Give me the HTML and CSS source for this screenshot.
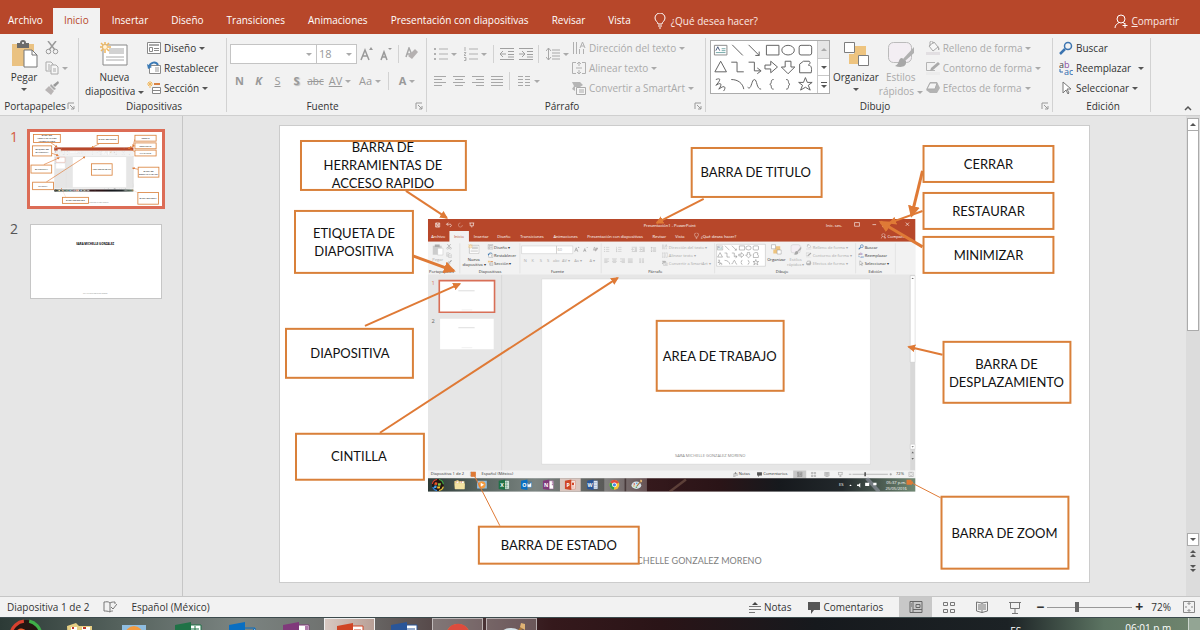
FILE: index.html
```html
<!DOCTYPE html>
<html lang="es">
<head>
    <meta charset="UTF-8">
    <meta name="viewport" content="width=device-width, initial-scale=1.0">
    <title>Presentación - PowerPoint</title>
    <link rel="stylesheet" href="styles.css">
</head>
<body>

<!-- Icon set -->
<svg class="sprite" aria-hidden="true">
    <symbol id="i-paste" viewBox="0 0 28 28">
        <path d="M2 4h22v22H2z" fill="#eac282"/>
        <path d="M7 3h3a3 3 0 0 1 6 0h3v5H7z" fill="#6b6b6b"/><circle cx="13" cy="3" r="1" fill="#fff"/>
        <path d="M14 10h8l5 5v12H14z" fill="#fff" stroke="#777"/><path d="M22 10v5h5" fill="none" stroke="#777"/>
    </symbol>
    <symbol id="i-cut" viewBox="0 0 14 14" fill="none" stroke="#9a9a9a">
        <path d="M3 0l7 9M11 0L4 9" stroke-width="1.5"/><circle cx="3.5" cy="10.5" r="2.3"/><circle cx="10.5" cy="10.5" r="2.3"/>
    </symbol>
    <symbol id="i-copy" viewBox="0 0 14 14" fill="#f6f6f6" stroke="#aaa">
        <path d="M1 1h5l2 2v7H1z"/><path d="M6 4h5l2 2v7H6z"/><path d="M3 4h2M3 6h2M3 8h2M8 8h3M8 10h3"/>
    </symbol>
    <symbol id="i-brush" viewBox="0 0 14 14">
        <path d="M13 0l1 2-4 4-2-2z" fill="#999"/><path d="M6 3l5 5-2 1-4-4z" fill="#aaa"/><path d="M4 5l5 5-3 4L0 9z" fill="#b9b5b5"/>
    </symbol>
    <symbol id="i-newslide" viewBox="0 0 28 24">
        <path d="M3 3h24v20H3z" fill="#fff" stroke="#888"/><path d="M9 6h15v6H9z" fill="#d2d2d2"/><path d="M6 15h18M6 18h18" stroke="#aaa"/>
        <path d="M5 0v11M0 5h11M1 1l8 8M9 1l-8 8" stroke="#f0b75c" stroke-width="1.5"/><circle cx="5" cy="5" r="2" fill="#fff4dc"/>
    </symbol>
    <symbol id="i-layout" viewBox="0 0 14 14" fill="none" stroke="#8a8a8a">
        <path d="M.5 1.5h13v11H.5z" fill="#fff"/><path d="M2 4h10" stroke-width="2" stroke="#aaa"/><path d="M2.5 6.5h3v4h-3z"/><path d="M7 7.500h5M7 9.500h5"/>
    </symbol>
    <symbol id="i-reset" viewBox="0 0 14 14" fill="none">
        <path d="M2.500 4.500h11v8h-11z" fill="#fff" stroke="#8a8a8a"/><path d="M8 6h4v5H8z" fill="#ccc"/>
        <path d="M2 6c1-5 7-6 9-2" stroke="#3b7ab5" stroke-width="2"/><path d="M0 3l1 5 4-2z" fill="#3b7ab5"/>
    </symbol>
    <symbol id="i-section" viewBox="0 0 14 14" fill="none">
        <path d="M3 0v7M0 3h6M1 1l4 4M5 1L1 5" stroke="#f0b75c"/><path d="M7 3h6" stroke="#d98242" stroke-width="2"/>
        <path d="M5.500 6.500h8v6h-8z" fill="#fff" stroke="#888"/><path d="M5 9.500h8" stroke="#888"/>
    </symbol>
    <symbol id="i-grow" viewBox="0 0 14 14" fill="none" stroke="#999">
        <path d="M1 13L5 3l4 10M3 9h5" stroke-width="1.500"/><path d="M9 3l2-3 2 3z" fill="#999" stroke="none"/>
    </symbol>
    <symbol id="i-shrink" viewBox="0 0 14 14" fill="none" stroke="#999">
        <path d="M2 13l3-8 3 8M3 10h4" stroke-width="1.500"/><path d="M9 1l2 2 2-2z" fill="#999" stroke="none"/>
    </symbol>
    <symbol id="i-eraser" viewBox="0 0 14 14">
        <path d="M1 10L4 1l3 7M2 7h4" fill="none" stroke="#a8a8a8" stroke-width="1.500"/><path d="M10 2l3 3-6 7-4-3z" fill="#b5b1b1"/>
    </symbol>
    <symbol id="i-bullets" viewBox="0 0 14 14" stroke="#b0b0b0">
        <path d="M5 2h9M5 7h9M5 12h9"/><path d="M0 2h2M0 7h2M0 12h2" stroke-width="2"/>
    </symbol>
    <symbol id="i-numbers" viewBox="0 0 14 14" stroke="#b0b0b0" fill="none">
        <path d="M5 2h9M5 7h9M5 12h9M1 0v4M0 5.500h2l-2 3h2M0 10.500h2v3H0M1 12h1"/>
    </symbol>
    <symbol id="i-outdent" viewBox="0 0 14 14" stroke="#a0a0a0" fill="none">
        <path d="M0 1.500h14M8 4.500h6M8 7.500h6M0 12.500h14M8 10h6M0 7h6M3 4L0 7l3 3"/>
    </symbol>
    <symbol id="i-indent" viewBox="0 0 14 14" stroke="#a0a0a0" fill="none">
        <path d="M0 1.500h14M8 4.500h6M8 7.500h6M0 12.500h14M8 10h6M0 7h6M3 4l3 3-3 3"/>
    </symbol>
    <symbol id="i-spacing" viewBox="0 0 14 14" stroke="#a8a8a8" fill="none">
        <path d="M6 3h8M6 6h8M6 9h8M6 12h8M2.500 1v12M0 4l2.500-3L5 4M0 10l2.500 3L5 10"/>
    </symbol>
    <symbol id="i-left" viewBox="0 0 14 14" stroke="#a8a8a8"><path d="M1 2.500h12M1 5.500h8M1 8.500h12M1 11.500h8"/></symbol>
    <symbol id="i-center" viewBox="0 0 14 14" stroke="#a8a8a8"><path d="M1 2.500h12M3 5.500h8M1 8.500h12M3 11.500h8"/></symbol>
    <symbol id="i-right" viewBox="0 0 14 14" stroke="#a8a8a8"><path d="M1 2.500h12M5 5.500h8M1 8.500h12M5 11.500h8"/></symbol>
    <symbol id="i-justify" viewBox="0 0 14 14" stroke="#a8a8a8"><path d="M1 2.500h12M1 5.500h12M1 8.500h12M1 11.500h12"/></symbol>
    <symbol id="i-columns" viewBox="0 0 14 14" stroke="#a8a8a8"><path d="M1 2.500h5M8 2.500h5M1 5.500h5M8 5.500h5M1 8.500h5M8 8.500h5M1 11.500h5M8 11.500h5"/></symbol>
    <symbol id="i-textdir" viewBox="0 0 14 14" stroke="#b0b0b0" fill="none">
        <path d="M1.500 1v12M4.500 1v12M7.500 8v5M11.500 8v5M8 7l2.500-6L13 7M9 5h3"/>
    </symbol>
    <symbol id="i-aligntext" viewBox="0 0 14 14" stroke="#b0b0b0" fill="none">
        <path d="M4 1.500H.5v11H4M10 1.500h3.500v11H10M7 1v4M5 3l2-2 2 2M7 9v4M5 11l2 2 2-2M4 7h6"/>
    </symbol>
    <symbol id="i-smartart" viewBox="0 0 14 14">
        <path d="M0 1h8l3 3-3 2H3v4L0 8l2-3z" fill="#b5b5b5"/><path d="M4.500 6.500h9v7h-9zM7 9h5M7 11h5" fill="#f6f6f6" stroke="#aaa"/>
    </symbol>
    <symbol id="i-shapes" viewBox="0 0 108 54" fill="none" stroke="#5f5f5f">
        <path d="M2.500 4.500h13v10h-13z" stroke="#888"/><path d="M10 8h4M10 10h4M4 12h10" stroke="#7aa"/><path d="M4 10l2-4 2 4" stroke="#457"/>
        <path d="M21 4l11 11M38 4l11 11M49 15v-4M49 15h-4M56.500 4.500h13v10h-13z"/>
        <ellipse cx="79" cy="9.500" rx="6.500" ry="5"/><rect x="90.500" y="4.500" width="13" height="10" rx="2"/>
        <path d="M9 21l-6 11h12zM20 22h6v10h7M38 22h6v9h6M47 28l4 3-4 3M55 25h6v-4l7 6-7 6v-4h-6zM76 21h6v6h4l-7 7-7-7h4zM91 33v-9l4-3h6c2 2 0 3-1 4 3 0 4 3 3 8z"/>
        <path d="M4 40c8-3 2 4 0 6 8-5 5 2 3 4 8-6 7 0 5 2M20 40c7 0 12 4 13 10M37 48c4 4 4-8 7-8s2 10 7 10M64 40c-4 0-1 4-4 5 3 1 0 5 4 5M77 40c4 0 1 4 4 5-3 1 0 5-4 5"/>
        <path d="M97 38l2 5h5l-4 3 2 5-5-3-5 3 2-5-4-3h5z"/>
    </symbol>
    <symbol id="i-arrange" viewBox="0 0 28 28">
        <path d="M12 6h12v10H12zM7 14h9v10H7z" fill="#eec47f"/>
        <path d="M2.500 2.500h10v10h-10zM16.500 15.500h10v10h-10z" fill="#fff" stroke="#7d7d7d"/>
    </symbol>
    <symbol id="i-styles" viewBox="0 0 28 28">
        <rect x="1.500" y="2.500" width="23" height="20" rx="5" fill="#f3eef3" stroke="#bbb"/>
        <path d="M27 7L16 19l2 2 9-8z" fill="#b0b0b0"/><path d="M15 18c-4 0-2 6-7 8 6 2 12 1 11-5z" fill="#a8a8a8"/>
    </symbol>
    <symbol id="i-fill" viewBox="0 0 14 14">
        <path d="M3 5l5-4 4 5-5 4zM4 5V1c1-2 3-1 3 2" fill="#f7f7f7" stroke="#a8a8a8"/><path d="M12 5c2 3 2 4 0 4z" fill="#aaa"/><path d="M0 11h14v3H0z" fill="#e2dfe2"/>
    </symbol>
    <symbol id="i-outline" viewBox="0 0 14 14">
        <path d="M9 1.500H.5v8H9" fill="none" stroke="#b5b5b5"/><path d="M12 1l2 2-7 6-3 1 1-3z" fill="#aaa"/><path d="M0 11h14v3H0z" fill="#ececec"/>
    </symbol>
    <symbol id="i-effects" viewBox="0 0 14 14">
        <path d="M4 1h7l3 6-3 5H4L0 9z" fill="#b3b3b3"/><path d="M4 2h7L9 8H1z" fill="#f4f4f4" stroke="#aaa"/>
    </symbol>
    <symbol id="i-search" viewBox="0 0 14 14" fill="none" stroke="#3c74b0">
        <circle cx="9" cy="5" r="3.500" stroke-width="1.500"/><path d="M6 8l-5 5" stroke-width="2.500"/>
    </symbol>
    <symbol id="i-replace" viewBox="0 0 14 14">
        <text x="0" y="7" font-size="9" fill="#444">a</text><text x="5" y="7" font-size="9" fill="#8a4ba0">b</text><text x="5" y="14" font-size="9" fill="#2d6bb0">ac</text>
        <path d="M1 8v3h3" fill="none" stroke="#2d6bb0"/>
    </symbol>
    <symbol id="i-select" viewBox="0 0 14 14"><path d="M4 1v11l3-3 2 4 1-1-2-4h4z" fill="#fff" stroke="#777"/></symbol>
    <symbol id="i-bulb" viewBox="0 0 12 16" fill="none" stroke="#fff">
        <path d="M4 11c0-2-3-3-3-6a5 5 0 0 1 10 0c0 3-3 4-3 6zM4 13h4M5 15h2"/>
    </symbol>
    <symbol id="i-person" viewBox="0 0 14 14" fill="none" stroke="#fff">
        <circle cx="7" cy="5" r="4"/><path d="M1 14c0-3 2-4 4-5.500M9 8.500l2 1.500M11 9v5M8.500 11.500h5"/>
    </symbol>
    <symbol id="i-launcher" viewBox="0 0 8 8" fill="none" stroke="#999"><path d="M1 7V1h6M3 3l4 4M7 4v3H4"/></symbol>
    <symbol id="i-more" viewBox="0 0 8 8"><path d="M1 1.500h6" stroke="#555"/><path d="M1 4h6L4 7z" fill="#555"/></symbol>
    <symbol id="i-book" viewBox="0 0 14 14" fill="none" stroke="#777"><path d="M7 3C5 1 3 2 1 2v9c2 0 4 0 6 1 1-1 2-1 3-1M7 3v9M7 3c1-1 3-1 5-1v2M8 7l2 2 4-5"/></symbol>
    <symbol id="i-notes" viewBox="0 0 14 14"><path d="M1 6.500h12M1 9.500h12M1 12.500h6" stroke="#777"/><path d="M4 5l3-3 3 3z" fill="#444"/></symbol>
    <symbol id="i-comment" viewBox="0 0 14 14"><path d="M1 2h12v8H7l-3 4v-4H1z" fill="#555"/></symbol>
    <symbol id="i-normal" viewBox="0 0 14 14" fill="none" stroke="#666"><path d="M1 1.500h12v11H1zM4 2v10M4 9.500h9M7 4.500h4v3H7zM2 4h1M2 6h1"/></symbol>
    <symbol id="i-sorter" viewBox="0 0 14 14" fill="none" stroke="#777"><path d="M1.500 2.500h4v3h-4zM8.500 2.500h4v3h-4zM1.500 9.500h4v3h-4zM8.500 9.500h4v3h-4z"/></symbol>
    <symbol id="i-reading" viewBox="0 0 14 14" fill="none" stroke="#777"><path d="M7 3L1.500 2v9L7 12.500 12.500 11V2zM7 3v10M3 5h3M3 7h3M3 9h3M8 5h3M8 7h3M8 9h3"/></symbol>
    <symbol id="i-show" viewBox="0 0 14 14" fill="none" stroke="#777"><path d="M1 2.500h12M2.500 3v5.500h9V3M7 9v4M4 13.500h6"/></symbol>
    <symbol id="i-fit" viewBox="0 0 14 14" fill="none" stroke="#888"><path d="M1.500 1.500h11v11h-11zM7 3v2M7 9v2M3 7h2M9 7h2M5.500 4L7 2.500 8.500 4M5.500 10L7 11.500 8.500 10"/></symbol>
    <symbol id="t-start" viewBox="0 0 34 34">
        <circle cx="17" cy="17" r="15" fill="#241512"/>
        <path d="M3 14A14 14 0 0 1 15 3" fill="none" stroke="#d8412f" stroke-width="3"/><path d="M20 3a14 14 0 0 1 11 12" fill="none" stroke="#3fae49" stroke-width="3"/>
        <path d="M4 22a14 14 0 0 0 11 9" fill="none" stroke="#2f80d8" stroke-width="3"/><path d="M20 31a14 14 0 0 0 11-10" fill="none" stroke="#e7c23a" stroke-width="3"/>
        <path d="M9 11c3-2 5-1 7 0l-1 6c-3-1-5-1-7 0z" fill="#ef5a2b"/><path d="M18 12c2 1 5 1 7 0l-1 6c-2 1-5 1-7 0z" fill="#86c440"/>
        <path d="M8 19c2-1 4-1 6 0l-1 6c-2-1-4-1-6 0z" fill="#42a5e5"/><path d="M16 20c2 1 5 1 7 0l-1 5c-2 1-5 1-7 0z" fill="#fbc52d"/>
    </symbol>
    <symbol id="t-folder" viewBox="0 0 28 28">
        <path d="M1 5l9-3 3 3h13v19H2z" fill="#e6cf84"/><path d="M5 6h6v4H5zM16 6h8v4h-8z" fill="#fff"/><path d="M6 7h2M17 7h3" stroke="#c0392b" stroke-width="2"/><path d="M2 11h25l-1 14H3z" fill="#f3e3a2"/>
    </symbol>
    <symbol id="t-media" viewBox="0 0 28 28"><path d="M2 4h24v19H2z" fill="#8fbde0"/><circle cx="14" cy="14" r="9" fill="#f39a3e"/><path d="M11 9l8 5-8 5z" fill="#fff"/></symbol>
    <symbol id="t-excel" viewBox="0 0 28 28"><path d="M14 4h13v20H14z" fill="#fff" stroke="#1f7246"/><path d="M16 8h9M16 12h9M16 16h9M16 20h9M21 5v18" stroke="#1f7246"/><path d="M1 4l16-3v26L1 24z" fill="#1f7246"/><text x="5" y="19" font-size="13" font-weight="700" fill="#fff">X</text></symbol>
    <symbol id="t-outlook" viewBox="0 0 28 28"><path d="M14 7h13v13H14zl7 6 6-6" fill="#fff" stroke="#0a6fc2"/><path d="M1 4l16-3v26L1 24z" fill="#0a6fc2"/><text x="4" y="19" font-size="13" font-weight="700" fill="#fff">O</text></symbol>
    <symbol id="t-onenote" viewBox="0 0 28 28"><path d="M14 4h13v20H14z" fill="#fff" stroke="#80397b"/><path d="M23 5h3v4h-3zM23 11h3v4h-3z" fill="#b078ac"/><path d="M1 4l16-3v26L1 24z" fill="#80397b"/><text x="4" y="19" font-size="13" font-weight="700" fill="#fff">N</text></symbol>
    <symbol id="t-ppt" viewBox="0 0 28 28"><path d="M14 4h13v20H14z" fill="#fff" stroke="#d04525"/><path d="M18 8h7M18 17h7M18 20h7" stroke="#d04525"/><circle cx="21" cy="12" r="3" fill="#d04525"/><path d="M1 4l16-3v26L1 24z" fill="#d04525"/><text x="5" y="19" font-size="13" font-weight="700" fill="#fff">P</text></symbol>
    <symbol id="t-word" viewBox="0 0 28 28"><path d="M14 4h13v20H14z" fill="#fff" stroke="#2a5699"/><path d="M17 8h8M17 12h8M17 16h8M17 20h8" stroke="#2a5699"/><path d="M1 4l16-3v26L1 24z" fill="#2a5699"/><text x="2" y="19" font-size="13" font-weight="700" fill="#fff">W</text></symbol>
    <symbol id="t-chrome" viewBox="0 0 28 28">
        <circle cx="14" cy="14" r="12" fill="#f4c430"/><path d="M14 14L3.500 8A12 12 0 0 1 25 9z" fill="#dd4b3e"/><path d="M14 14L3.500 8A12 12 0 0 0 13 26z" fill="#2f9e54"/>
        <circle cx="14" cy="14" r="6" fill="#fff"/><circle cx="14" cy="14" r="4" fill="#4587e8"/>
    </symbol>
    <symbol id="t-paint" viewBox="0 0 28 28">
        <ellipse cx="13" cy="15" rx="12" ry="9" fill="#d5e3e8"/><circle cx="8" cy="12" r="2" fill="#d9483b"/><circle cx="14" cy="10" r="2" fill="#4a9bd4"/><circle cx="7" cy="17" r="2" fill="#e6b93a"/><circle cx="13" cy="20" r="2" fill="#55a35a"/>
        <path d="M13 17L24 3l2 2-11 13z" fill="#a8763a"/><path d="M23 1l4 1v6l-5-3z" fill="#dfb375"/>
    </symbol>
</svg>

<header class="tabs">
    <nav class="tab-list">
        <a class="tab file" href="#">Archivo</a>
        <a class="tab active" href="#">Inicio</a>
        <a class="tab" href="#">Insertar</a>
        <a class="tab" href="#">Diseño</a>
        <a class="tab" href="#">Transiciones</a>
        <a class="tab" href="#">Animaciones</a>
        <a class="tab" href="#">Presentación con diapositivas</a>
        <a class="tab" href="#">Revisar</a>
        <a class="tab" href="#">Vista</a>
    </nav>
    <button class="tell-me"><svg class="bulb"><use href="#i-bulb"/></svg>¿Qué desea hacer?</button>
    <button class="share"><svg class="icon"><use href="#i-person"/></svg><span><u>C</u>ompartir</span></button>
</header>

<div class="ribbon">
    <section class="group g-clipboard">
        <div class="group-body">
            <button class="big"><svg class="icon-big"><use href="#i-paste"/></svg><span>Pegar</span><i class="caret"></i></button>
            <div class="stack">
                <button class="small" aria-label="Cortar"><svg class="icon"><use href="#i-cut"/></svg></button>
                <button class="small" aria-label="Copiar"><svg class="icon"><use href="#i-copy"/></svg><i class="caret off"></i></button>
                <button class="small" aria-label="Copiar formato"><svg class="icon"><use href="#i-brush"/></svg></button>
            </div>
        </div>
        <div class="group-name"><span>Portapapeles</span><svg class="launcher"><use href="#i-launcher"/></svg></div>
    </section>

    <section class="group g-slides">
        <div class="group-body">
            <button class="big"><svg class="icon-big"><use href="#i-newslide"/></svg><span>Nueva</span><span>diapositiva <i class="caret"></i></span></button>
            <div class="stack">
                <button class="small"><svg class="icon"><use href="#i-layout"/></svg>Diseño<i class="caret"></i></button>
                <button class="small"><svg class="icon"><use href="#i-reset"/></svg>Restablecer</button>
                <button class="small"><svg class="icon"><use href="#i-section"/></svg>Sección<i class="caret"></i></button>
            </div>
        </div>
        <div class="group-name"><span>Diapositivas</span></div>
    </section>

    <section class="group g-font">
        <div class="group-body rows">
            <div class="row">
                <span class="combo combo-font"><select aria-label="Fuente"><option></option></select><i class="caret off"></i></span>
                <span class="combo combo-size"><select aria-label="Tamaño de fuente"><option>18</option></select><i class="caret off"></i></span>
                <button class="tool" aria-label="Aumentar tamaño"><svg class="icon"><use href="#i-grow"/></svg></button>
                <button class="tool" aria-label="Reducir tamaño"><svg class="icon"><use href="#i-shrink"/></svg></button>
                <i class="sep"></i>
                <button class="tool" aria-label="Borrar formato"><svg class="icon"><use href="#i-eraser"/></svg></button>
            </div>
            <div class="row">
                <button class="tool"><b>N</b></button>
                <button class="tool"><b><em>K</em></b></button>
                <button class="tool"><u>S</u></button>
                <button class="tool shadow"><b>S</b></button>
                <button class="tool abc"><s>abc</s></button>
                <button class="tool wide"><u>AV</u><i class="caret off"></i></button>
                <button class="tool wide">Aa<i class="caret off"></i></button>
                <i class="sep"></i>
                <button class="tool wide"><b>A</b><i class="caret off"></i></button>
            </div>
        </div>
        <div class="group-name"><span>Fuente</span><svg class="launcher"><use href="#i-launcher"/></svg></div>
    </section>

    <section class="group g-paragraph">
        <div class="group-body">
            <div class="rows">
                <div class="row">
                    <button class="tool wide" aria-label="Viñetas"><svg class="icon"><use href="#i-bullets"/></svg><i class="caret off"></i></button>
                    <button class="tool wide" aria-label="Numeración"><svg class="icon"><use href="#i-numbers"/></svg><i class="caret off"></i></button>
                    <i class="sep"></i>
                    <button class="tool" aria-label="Disminuir nivel"><svg class="icon"><use href="#i-outdent"/></svg></button>
                    <button class="tool" aria-label="Aumentar nivel"><svg class="icon"><use href="#i-indent"/></svg></button>
                    <i class="sep"></i>
                    <button class="tool wide" aria-label="Interlineado"><svg class="icon"><use href="#i-spacing"/></svg><i class="caret off"></i></button>
                </div>
                <div class="row">
                    <button class="tool" aria-label="Izquierda"><svg class="icon"><use href="#i-left"/></svg></button>
                    <button class="tool" aria-label="Centrar"><svg class="icon"><use href="#i-center"/></svg></button>
                    <button class="tool" aria-label="Derecha"><svg class="icon"><use href="#i-right"/></svg></button>
                    <button class="tool" aria-label="Justificar"><svg class="icon"><use href="#i-justify"/></svg></button>
                    <i class="sep"></i>
                    <button class="tool wide" aria-label="Columnas"><svg class="icon"><use href="#i-columns"/></svg><i class="caret off"></i></button>
                </div>
            </div>
            <div class="stack">
                <button class="small off"><svg class="icon"><use href="#i-textdir"/></svg>Dirección del texto<i class="caret off"></i></button>
                <button class="small off"><svg class="icon"><use href="#i-aligntext"/></svg>Alinear texto<i class="caret off"></i></button>
                <button class="small off"><svg class="icon"><use href="#i-smartart"/></svg>Convertir a SmartArt<i class="caret off"></i></button>
            </div>
        </div>
        <div class="group-name"><span>Párrafo</span><svg class="launcher"><use href="#i-launcher"/></svg></div>
    </section>

    <section class="group g-drawing">
        <div class="group-body">
            <div class="gallery">
                <svg class="shapes"><use href="#i-shapes"/></svg>
                <div class="gallery-scroll">
                    <button aria-label="Arriba" disabled><i class="caret up off"></i></button>
                    <button aria-label="Abajo"><i class="caret"></i></button>
                    <button aria-label="Más"><svg class="launcher"><use href="#i-more"/></svg></button>
                </div>
            </div>
            <button class="big"><svg class="icon-big"><use href="#i-arrange"/></svg><span>Organizar</span><i class="caret"></i></button>
            <button class="big off"><svg class="icon-big"><use href="#i-styles"/></svg><span>Estilos</span><span>rápidos <i class="caret off"></i></span></button>
            <div class="stack">
                <button class="small off"><svg class="icon"><use href="#i-fill"/></svg>Relleno de forma<i class="caret off"></i></button>
                <button class="small off"><svg class="icon"><use href="#i-outline"/></svg>Contorno de forma<i class="caret off"></i></button>
                <button class="small off"><svg class="icon"><use href="#i-effects"/></svg>Efectos de forma<i class="caret off"></i></button>
            </div>
        </div>
        <div class="group-name"><span>Dibujo</span><svg class="launcher"><use href="#i-launcher"/></svg></div>
    </section>

    <section class="group g-editing">
        <div class="group-body">
            <div class="stack">
                <button class="small"><svg class="icon"><use href="#i-search"/></svg>Buscar</button>
                <button class="small spread"><svg class="icon"><use href="#i-replace"/></svg>Reemplazar<i class="caret"></i></button>
                <button class="small"><svg class="icon"><use href="#i-select"/></svg>Seleccionar<i class="caret"></i></button>
            </div>
        </div>
        <div class="group-name"><span>Edición</span></div>
    </section>
    <div class="ribbon-end"><button aria-label="Contraer la cinta"><svg class="launcher" viewBox="0 0 8 8"><path d="M1 6l3-3 3 3" fill="none" stroke="#555" stroke-width="1.500"/></svg></button></div>
</div>

<main class="workspace">
    <aside class="thumbs">
        <div class="thumb active">
            <span class="thumb-number">1</span>
            <svg class="thumb-slide" viewBox="280 126 810 456"><use href="#slide-art"/></svg>
        </div>
        <div class="thumb">
            <span class="thumb-number">2</span>
            <svg class="thumb-slide" viewBox="0 0 810 456">
                <text x="400" y="124" class="thumb-title">SARA MICHELLE GONZALEZ</text>
                <text x="400" y="436" class="thumb-foot">SARA MICHELLE GONZALEZ MORENO</text>
            </svg>
        </div>
    </aside>

    <div class="canvas">
        <svg class="slide" viewBox="280 126 810 456">
            <defs>
                <marker id="head" viewBox="0 0 6 6" refX="5" refY="3" markerWidth="4" markerHeight="4" orient="auto"><path d="M0 0l6 3-6 3z" fill="#df7a36"/></marker>
                <linearGradient id="bar">
                    <stop offset="0" stop-color="#2c3a36"/><stop offset=".1" stop-color="#55625d"/><stop offset=".22" stop-color="#7b8481"/><stop offset=".36" stop-color="#5a5a58"/>
                    <stop offset=".45" stop-color="#35191c"/><stop offset=".6" stop-color="#2a1417"/><stop offset=".72" stop-color="#16191d"/><stop offset=".85" stop-color="#22282b"/><stop offset="1" stop-color="#6f8873"/>
                </linearGradient>
            </defs>
            <g id="slide-art">
                <text x="762" y="564" class="slide-foot" text-anchor="end">SARA MICHELLE GONZALEZ MORENO</text>

                <!-- Captured window -->
                <svg x="428" y="219" width="488" height="273" viewBox="0 -22 1200 672" class="shot" preserveAspectRatio="none">
                    <path d="M0-22h1200v672H0z" fill="#e6e6e6"/>
                    <path d="M0-22h1200v56H0z" fill="#b7472a"/>
                    <path d="M0 34h1200v81H0z" fill="#f2f2f2"/>
                    <path d="M53 8h48v27H53z" fill="#f2f2f2"/>
                    <g fill="none" stroke="#fff" stroke-width="1.500">
                        <path d="M19-12h10v10H19zM21-12v4h6v-4M22-2v-4h4v4"/><path d="M46-9h8c5 0 5 6 0 6M50-13l-4 4 4 4"/>
                        <path d="M102-12h12M104-12v7h8v-7M108-5v4"/><path d="M1050-13h12v9h-12zM1094-8h9M1119-10h7v7h-7zM1176-13l8 8M1184-13l-8 8"/>
                    </g>
                    <path d="M80-12a5 5 0 1 0 5 5" fill="none" stroke="#d08a77" stroke-width="2"/>
                    <g fill="#fff">
                        <text x="531" y="-3">Presentación1 - PowerPoint</text><text x="980" y="-3">Inic. ses.</text>
                        <text x="8" y="24">Archivo</text><text x="113" y="24">Insertar</text><text x="171" y="24">Diseño</text><text x="227" y="24">Transiciones</text><text x="309" y="24">Animaciones</text>
                        <text x="392" y="24">Presentación con diapositivas</text><text x="553" y="24">Revisar</text><text x="609" y="24">Vista</text><text x="672" y="24">¿Qué desea hacer?</text><text x="1131" y="24">Compartir</text>
                    </g>
                    <text x="64" y="24" fill="#b7472a">Inicio</text>
                    <use href="#i-bulb" x="655" y="12" width="12" height="16"/><use href="#i-person" x="1114" y="13" width="14" height="14"/>
                    <path d="M12 44h22v22H12z" fill="#ccc"/><path d="M17 41h12v6H17z" fill="#aaa"/><path d="M24 50h13v17H24z" fill="#fff" stroke="#bbb"/>
                    <use href="#i-cut" x="45" y="40" width="14" height="14"/><use href="#i-copy" x="45" y="60" width="14" height="14"/><use href="#i-brush" x="45" y="79" width="14" height="14"/>
                    <use href="#i-newslide" x="99" y="40" width="28" height="24"/>
                    <use href="#i-layout" x="147" y="40" width="14" height="14"/><use href="#i-reset" x="147" y="60" width="14" height="14"/><use href="#i-section" x="147" y="80" width="14" height="14"/>
                    <path d="M230.500 44.500h86v19h-86zM316.500 44.500h40v19h-40z" fill="#fff" stroke="#bbb"/>
                    <use href="#i-grow" x="360" y="46" width="14" height="14"/><use href="#i-shrink" x="381" y="46" width="14" height="14"/><use href="#i-eraser" x="406" y="46" width="14" height="14"/>
                    <use href="#i-bullets" x="433" y="46" width="14" height="14"/><use href="#i-numbers" x="463" y="46" width="14" height="14"/><use href="#i-outdent" x="501" y="46" width="14" height="14"/><use href="#i-indent" x="520" y="46" width="14" height="14"/><use href="#i-spacing" x="548" y="46" width="14" height="14"/>
                    <use href="#i-left" x="433" y="74" width="14" height="14"/><use href="#i-center" x="452" y="74" width="14" height="14"/><use href="#i-right" x="472" y="74" width="14" height="14"/><use href="#i-justify" x="491" y="74" width="14" height="14"/><use href="#i-columns" x="519" y="74" width="14" height="14"/>
                    <use href="#i-textdir" x="576" y="40" width="14" height="14"/><use href="#i-aligntext" x="576" y="60" width="14" height="14"/><use href="#i-smartart" x="576" y="80" width="14" height="14"/>
                    <path d="M710.500 40.500h120v54h-120z" fill="#fff" stroke="#aaa"/><use href="#i-shapes" x="710" y="40" width="108" height="54"/>
                    <use href="#i-arrange" x="843" y="39" width="28" height="28"/><use href="#i-styles" x="892" y="39" width="28" height="28"/>
                    <use href="#i-fill" x="930" y="40" width="14" height="14"/><use href="#i-outline" x="930" y="60" width="14" height="14"/><use href="#i-effects" x="930" y="80" width="14" height="14"/>
                    <use href="#i-search" x="1059" y="40" width="14" height="14"/><use href="#i-replace" x="1059" y="60" width="14" height="14"/><use href="#i-select" x="1059" y="80" width="14" height="14"/>
                    <path d="M78.500 38v74M226.500 38v74M426.500 38v74M705.500 38v74M1052.500 38v74M1150.500 38v74" stroke="#d0d0d0"/>
                    <g fill="#333">
                        <text x="163" y="51">Diseño ▾</text><text x="163" y="71">Restablecer</text><text x="163" y="91">Sección ▾</text><text x="98" y="81">Nueva</text><text x="85" y="95">diapositiva ▾</text>
                        <text x="3" y="111">Portapapeles</text><text x="125" y="111">Diapositivas</text><text x="303" y="111">Fuente</text><text x="542" y="111">Párrafo</text><text x="856" y="111">Dibujo</text><text x="1084" y="111">Edición</text>
                        <text x="835" y="81">Organizar</text><text x="1075" y="51">Buscar</text><text x="1075" y="71">Reemplazar</text><text x="1075" y="91">Seleccionar ▾</text>
                    </g>
                    <g fill="#aaa">
                        <text x="11" y="81">Pegar</text><text x="319" y="58">60</text>
                        <text x="236" y="85">N</text><text x="255" y="85">K</text><text x="275" y="85">S</text><text x="293" y="85">S</text><text x="308" y="85">abc</text><text x="330" y="85">AV ▾</text><text x="360" y="85">Aa ▾</text><text x="398" y="85">A ▾</text>
                        <text x="593" y="51">Dirección del texto ▾</text><text x="593" y="71">Alinear texto ▾</text><text x="593" y="91">Convertir a SmartArt ▾</text>
                        <text x="890" y="81">Estilos</text><text x="884" y="95">rápidos ▾</text><text x="947" y="51">Relleno de forma ▾</text><text x="947" y="71">Contorno de forma ▾</text><text x="947" y="91">Efectos de forma ▾</text>
                    </g>
                    <path d="M181.500 116v482" stroke="#c6c6c6"/>
                    <path d="M280 126h809v456H280z" fill="#fff" stroke="#ccc"/>
                    <path d="M28 130h136v78H28z" fill="#fff" stroke="#d86f57" stroke-width="4"/><path d="M30 224h132v75H30z" fill="#fff"/>
                    <text x="9" y="141" fill="#d86f57" class="shot-num">1</text><text x="9" y="234" fill="#666" class="shot-num">2</text>
                    <path d="M75 155h40M75 246h40" stroke="#aaa"/><path d="M83 202h26M83 295h26" stroke="#ddd"/>
                    <text x="608" y="565" fill="#888">SARA MICHELLE GONZALEZ MORENO</text>
                    <path d="M1187 116h12v482h-12z" fill="#d8d8d8"/><path d="M1187 118h12v213h-12zM1187 533h12v12h-12z" fill="#fff" stroke="#bbb"/>
                    <path d="M1190 126l3-3 3 3zM1190 538l3 3 3-3zM1190 555l3-4 3 4zM1190 567l3 4 3-4z" fill="#666"/>
                    <path d="M0 598h1200v20H0z" fill="#f2f2f2"/><path d="M899 598h32v20h-32z" fill="#c8c8c8"/>
                    <g fill="#333"><text x="7" y="610">Diapositiva 1 de 2</text><text x="132" y="610">Español (México)</text><text x="765" y="610">Notas</text><text x="825" y="610">Comentarios</text><text x="1152" y="610">72%</text></g>
                    <use href="#i-book" x="103" y="600" width="14" height="14"/><use href="#i-notes" x="750" y="600" width="14" height="14"/><use href="#i-comment" x="809" y="600" width="14" height="14"/>
                    <use href="#i-normal" x="908" y="600" width="14" height="14"/><use href="#i-sorter" x="942" y="600" width="14" height="14"/><use href="#i-reading" x="975" y="600" width="14" height="14"/><use href="#i-show" x="1008" y="600" width="14" height="14"/><use href="#i-fit" x="1182" y="600" width="14" height="14"/>
                    <path d="M1036 607h6M1045 607h87M1136 607h6M1139 604v6" stroke="#666"/><path d="M1074 602h4v10h-4z" fill="#555"/>
                    <path d="M0 617h1200v33H0z" fill="url(#bar)"/><path d="M595 650l40-30" stroke="#8a6a58" stroke-width="6" opacity=".5"/><path d="M1080 617l30 33" stroke="#aab" stroke-width="9" opacity=".5"/>
                    <path d="M325 617h51v33h-51z" fill="#d9c6bf"/><path d="M434 617h50v33h-50zM488 617h51v33h-51z" fill="#fff" opacity=".25"/>
                    <use href="#t-start" x="8" y="617" width="33" height="33"/><use href="#t-folder" x="64" y="619" width="28" height="28"/><use href="#t-media" x="119" y="619" width="28" height="28"/><use href="#t-excel" x="173" y="619" width="28" height="28"/>
                    <use href="#t-outlook" x="228" y="619" width="28" height="28"/><use href="#t-onenote" x="282" y="619" width="28" height="28"/><use href="#t-ppt" x="336" y="619" width="28" height="28"/><use href="#t-word" x="391" y="619" width="28" height="28"/><use href="#t-chrome" x="445" y="619" width="28" height="28"/><use href="#t-paint" x="500" y="619" width="28" height="28"/>
                    <g fill="#fff"><text x="1012" y="636">ES</text><text x="1128" y="631">05:37 p.m.</text><text x="1126" y="646">25/05/2016</text><path d="M1037 636l3-4 3 4zM1056 632h4l4-4v12l-4-4h-4zM1076 628h10v8h-10zM1096 628h8v6h-8z"/></g>
                </svg>

                <!-- Arrows -->
                <g class="arrows">
                    <path d="M406 191L447 218"/>
                    <path d="M365 326L460 284"/>
                    <path d="M380 433L618 278"/>
                    <path d="M704 199L657 223"/>
                    <path d="M923 211L890 223"/>
                    <path d="M943 355L909 347"/>
                    <path class="bold" d="M413 256L454 271"/>
                    <path class="bold" d="M923 171L912 216"/>
                    <path class="bold" d="M923 247L881 222"/>
                    <path class="thin" d="M500 526L474 475M941 498L910 482"/>
                </g>
                <path d="M471 472h5v5h-5zM907 480h5v5h-5z" fill="#df7a36"/>

                <!-- Labels -->
                <g class="box">
                    <rect x="301" y="141" width="165" height="49"/><rect x="295" y="211" width="118" height="62"/><rect x="286" y="329" width="127" height="49"/>
                    <rect x="296" y="434" width="128" height="46"/><rect x="479" y="527" width="160" height="37"/><rect x="692" y="148" width="130" height="49"/>
                    <rect x="924" y="146" width="130" height="36"/><rect x="924" y="193" width="130" height="36"/><rect x="924" y="237" width="130" height="36"/>
                    <rect x="944" y="342" width="127" height="61"/><rect x="942" y="497" width="127" height="72"/><rect x="657" y="321" width="127" height="70"/>
                </g>
                <g class="label">
                    <text x="383" y="152">BARRA DE</text><text x="383" y="170">HERRAMIENTAS DE</text><text x="383" y="188">ACCESO RAPIDO</text>
                    <text x="354" y="238">ETIQUETA DE</text><text x="354" y="256">DIAPOSITIVA</text>
                    <text x="350" y="358">DIAPOSITIVA</text>
                    <text x="359" y="461">CINTILLA</text>
                    <text x="559" y="550">BARRA DE ESTADO</text>
                    <text x="756" y="177">BARRA DE TITULO</text>
                    <text x="989" y="169">CERRAR</text>
                    <text x="989" y="216">RESTAURAR</text>
                    <text x="989" y="260">MINIMIZAR</text>
                    <text x="1007" y="369">BARRA DE</text><text x="1007" y="387">DESPLAZAMIENTO</text>
                    <text x="1005" y="538">BARRA DE ZOOM</text>
                    <text x="720" y="361">AREA DE TRABAJO</text>
                </g>
            </g>
        </svg>
    </div>

    <div class="scrollbar">
        <button aria-label="Subir"><i class="caret up"></i></button>
        <div class="thumb-bar"></div>
        <button class="down" aria-label="Bajar"><i class="caret"></i></button>
        <button class="page" aria-label="Diapositiva anterior"><i class="caret up"></i><i class="caret up"></i></button>
        <button class="page" aria-label="Diapositiva siguiente"><i class="caret"></i><i class="caret"></i></button>
    </div>
</main>

<footer class="status">
    <span>Diapositiva 1 de 2</span>
    <button aria-label="Ortografía"><svg class="icon"><use href="#i-book"/></svg></button>
    <span>Español (México)</span>
    <div class="status-right">
        <button><svg class="icon"><use href="#i-notes"/></svg>Notas</button>
        <button><svg class="icon"><use href="#i-comment"/></svg>Comentarios</button>
        <div class="views">
            <button class="view on" aria-label="Normal"><svg class="icon"><use href="#i-normal"/></svg></button>
            <button class="view" aria-label="Clasificador"><svg class="icon"><use href="#i-sorter"/></svg></button>
            <button class="view" aria-label="Vista de lectura"><svg class="icon"><use href="#i-reading"/></svg></button>
            <button class="view" aria-label="Presentación"><svg class="icon"><use href="#i-show"/></svg></button>
        </div>
        <div class="zoom">
            <button aria-label="Alejar">−</button>
            <input type="range" min="0" max="100" value="34" aria-label="Zoom">
            <button aria-label="Acercar">+</button>
            <span class="percent">72%</span>
            <button aria-label="Ajustar"><svg class="icon"><use href="#i-fit"/></svg></button>
        </div>
    </div>
</footer>

<div class="taskbar">
    <button class="task start" aria-label="Inicio de Windows"><svg><use href="#t-start"/></svg></button>
    <button class="task" aria-label="Explorador"><svg><use href="#t-folder"/></svg></button>
    <button class="task" aria-label="Reproductor"><svg><use href="#t-media"/></svg></button>
    <button class="task" aria-label="Excel"><svg><use href="#t-excel"/></svg></button>
    <button class="task" aria-label="Outlook"><svg><use href="#t-outlook"/></svg></button>
    <button class="task" aria-label="OneNote"><svg><use href="#t-onenote"/></svg></button>
    <button class="task current" aria-label="PowerPoint"><svg><use href="#t-ppt"/></svg></button>
    <button class="task" aria-label="Word"><svg><use href="#t-word"/></svg></button>
    <button class="task open" aria-label="Chrome"><svg><use href="#t-chrome"/></svg></button>
    <button class="task open" aria-label="Paint"><svg><use href="#t-paint"/></svg></button>
    <div class="tray"><span class="lang">ES</span><span class="clock">06:01 p.m.</span><i class="desktop"></i></div>
</div>

</body>
</html>
```
FILE: styles.css
```css
* {
    box-sizing: border-box;
}
body {
    margin: 0;
    height: 100vh;
    display: flex;
    flex-direction: column;
    overflow: hidden;
    font-family: "Open Sans", "Noto Sans", sans-serif;
    font-size: 10px;
    line-height: 14px;
    color: #333;
    background-color: #e6e6e6;
}
button {
    font: inherit;
    color: inherit;
    background: none;
    border: 0;
    padding: 0;
    cursor: pointer;
}
svg {
    display: block;
    flex: none;
}
.sprite {
    display: none;
}
.icon {
    width: 14px;
    height: 14px;
}
.icon-big {
    width: 28px;
    height: 28px;
}
.launcher {
    width: 8px;
    height: 8px;
}
.caret {
    display: inline-block;
    flex: none;
    border: 3px solid transparent;
    border-top: 3px solid #555;
    border-bottom: 0;
    vertical-align: middle;
}
.caret.up {
    border-top: 0;
    border-bottom: 3px solid #555;
}
.caret.off {
    border-top-color: #aaa;
}
.caret.up.off {
    border-bottom-color: #aaa;
}

/* Tabs */
.tabs {
    display: flex;
    align-items: flex-end;
    height: 34px;
    flex: none;
    background-color: #b7472a;
    color: #fff;
}
.tab-list {
    display: flex;
}
.tab {
    height: 26px;
    padding: 5px 11px 0;
    color: #fff;
    text-decoration: none;
    white-space: nowrap;
}
.tab.file {
    padding: 5px 10px 0 8px;
}
.tab.active {
    background-color: #f2f2f2;
    color: #b7472a;
}
.tab.active ~ .tab {
    margin-left: 1px;
}
.tell-me, .share {
    display: flex;
    align-items: center;
    height: 26px;
    gap: 5px;
    color: #fbe9e4;
}
.tell-me {
    margin-left: 12px;
}
.bulb {
    width: 12px;
    height: 16px;
}
.share {
    margin-left: auto;
    margin-right: 21px;
    gap: 3px;
}

/* Ribbon */
.ribbon {
    display: grid;
    grid-template-columns: 79fr 148fr 200fr 279fr 347fr 98fr 49fr;
    flex: none;
    height: 82px;
    padding: 4px 0 3px;
    background-color: #f2f2f2;
    border-bottom: 1px solid #cfcfcf;
}
.group {
    display: flex;
    flex-direction: column;
    min-width: 0;
    padding: 0 3px;
    border-right: 1px solid #d2d2d2;
}
.g-slides, .g-editing {
    padding-left: 6px;
}
.ribbon-end {
    display: flex;
    justify-content: flex-end;
    align-items: flex-end;
    padding-right: 8px;
}
.group-body {
    display: flex;
    flex: 1;
}
.group-name {
    display: flex;
    align-items: center;
    height: 13px;
}
.group-name span {
    flex: 1;
    text-align: center;
}
.big {
    display: flex;
    flex-direction: column;
    align-items: center;
    justify-content: flex-start;
    min-width: 42px;
    padding-top: 2px;
    white-space: nowrap;
}
.big .icon-big {
    margin-bottom: 2px;
}
.big > .caret {
    margin-top: 4px;
}
.stack {
    display: flex;
    flex-direction: column;
}
.g-slides .stack, .g-drawing .stack {
    margin-left: 3px;
}
.small {
    display: flex;
    align-items: center;
    height: 20px;
    gap: 3px;
    white-space: nowrap;
}
.spread .caret {
    margin-left: 4px;
}
.off {
    color: #aaa;
}
.rows {
    display: flex;
    flex-direction: column;
    gap: 7px;
    padding-top: 6px;
}
.row {
    display: flex;
    align-items: center;
    height: 20px;
    color: #999;
}
.tool {
    display: flex;
    align-items: center;
    justify-content: center;
    width: 19px;
    height: 20px;
    font-size: 11px;
}
.tool.wide {
    width: 30px;
    gap: 3px;
}
.tool.abc {
    font-size: 10px;
}
.tool.shadow {
    text-shadow: 1px 1px 1px #bbb;
}
.sep {
    width: 1px;
    height: 18px;
    margin: 0 3px;
    background-color: #d2d2d2;
}
.combo {
    display: flex;
    align-items: center;
    height: 20px;
    padding-right: 4px;
    background-color: #fff;
    border: 1px solid #c4c4c4;
}
.combo-font {
    width: 87px;
}
.combo-size {
    width: 41px;
    margin-left: -1px;
}
.combo select {
    flex: 1;
    min-width: 0;
    padding: 0 2px;
    border: 0;
    background: none;
    appearance: none;
    font: inherit;
    font-size: 11px;
    color: #999;
}
.gallery {
    display: flex;
    height: 54px;
    margin: 2px 3px 0 1px;
    border: 1px solid #ababab;
    background-color: #fff;
}
.shapes {
    width: 106px;
    height: 52px;
}
.gallery-scroll {
    display: flex;
    flex-direction: column;
    width: 12px;
    border-left: 1px solid #c8c8c8;
}
.gallery-scroll button {
    flex: 1;
    display: flex;
    align-items: center;
    justify-content: center;
}
.gallery-scroll button + button {
    border-top: 1px solid #c8c8c8;
}
.gallery-scroll button:disabled {
    background-color: #e6e6e6;
}

/* Workspace */
.workspace {
    display: flex;
    flex: 1;
    min-height: 0;
    border-bottom: 1px solid #c6c6c6;
}
.thumbs {
    flex: none;
    width: 183px;
    padding: 14px 18px 0 10px;
    border-right: 1px solid #c6c6c6;
}
.thumb {
    display: flex;
    gap: 10px;
    margin-bottom: 14px;
}
.thumb-number {
    width: 8px;
    font-size: 14px;
    color: #555;
}
.thumb.active .thumb-number {
    color: #d35a3d;
}
.thumb-slide {
    --line: 5px;
    --arrow: 4px;
    flex: 1;
    min-width: 0;
    aspect-ratio: 810 / 456;
    background-color: #fff;
    border: 1px solid #c6c6c6;
    margin: 2px;
}
.thumb.active .thumb-slide {
    border: 0;
    outline: 3px solid #dc6c56;
}
.thumb-title {
    font-size: 18px;
    font-weight: 700;
    text-anchor: middle;
}
.thumb-foot {
    font-size: 9px;
    text-anchor: middle;
    fill: #888;
}
.canvas {
    flex: 1;
    min-width: 0;
    padding-top: 10px;
}
.slide {
    width: 80.7%;
    aspect-ratio: 810 / 456;
    margin: 0 auto;
    background-color: #fff;
    outline: 1px solid #cccccc;
}
.slide-foot {
    font-family: Lato, sans-serif;
    font-size: 9px;
    fill: #808080;
}
.shot text {
    font-size: 10px;
}
.shot .shot-num {
    font-size: 14px;
}
.arrows path {
    fill: none;
    stroke: #df7a36;
    stroke-width: var(--arrow, 2px);
    marker-end: url(#head);
}
.arrows .bold {
    stroke-width: var(--arrow, 3px);
}
.arrows .thin {
    stroke-width: 1px;
}
.box rect {
    fill: #fff;
    stroke: #d9803a;
    stroke-width: var(--line, 2px);
}
.label text {
    font-family: Lato, sans-serif;
    font-size: 13px;
    text-anchor: middle;
    fill: #111;
}
.scrollbar {
    display: flex;
    flex-direction: column;
    flex: none;
    width: 14px;
    padding: 2px 1px;
    background-color: #dcdcdc;
}
.scrollbar button {
    display: flex;
    flex-direction: column;
    align-items: center;
    justify-content: center;
    height: 13px;
    background-color: #fff;
    border: 1px solid #ababab;
}
.thumb-bar {
    flex: 0 0 42%;
    background-color: #fff;
    border: 1px solid #ababab;
    border-top: 0;
}
.scrollbar .down {
    margin-top: auto;
}
.scrollbar .page {
    height: 15px;
    gap: 1px;
    background: none;
    border: 0;
}
.scrollbar .page:last-child {
    margin-bottom: 18px;
}

/* Status bar */
.status {
    display: flex;
    align-items: center;
    flex: none;
    height: 20px;
    gap: 14px;
    padding: 0 4px 0 7px;
    background-color: #f2f2f2;
}
.status button {
    display: flex;
    align-items: center;
    gap: 2px;
}
.status-right {
    display: flex;
    align-items: center;
    gap: 16px;
    height: 20px;
    margin-left: auto;
}
.views {
    display: flex;
}
.view {
    justify-content: center;
    width: 33px;
    height: 20px;
}
.view.on {
    background-color: #c8c8c8;
}
.zoom {
    display: flex;
    align-items: center;
    gap: 3px;
    margin-left: -11px;
}
.zoom button {
    font-size: 14px;
    font-weight: 700;
}
.zoom input {
    width: 85px;
    height: 12px;
    margin: 0;
    appearance: none;
    background: linear-gradient(#999, #999) center / 100% 1px no-repeat;
}
.zoom input::-webkit-slider-thumb {
    appearance: none;
    width: 4px;
    height: 10px;
    background-color: #666;
}
.percent {
    margin: 0 8px 0 5px;
}

/* Taskbar */
.taskbar {
    display: flex;
    flex: none;
    height: 13px;
    overflow: hidden;
    border-top: 1px solid #3c4b4d;
    background: linear-gradient(90deg, #2c3a36, #55625d 10%, #7b8481 20%, #6b6b69 30%, #4a3436 40%, #35191c 46%, #2a1417 55%, #16191d 68%, #1c2225 84%, #5c7462 92%, #71866f);
}
.task {
    display: flex;
    justify-content: center;
    width: 51px;
    height: 34px;
    margin-right: 3px;
    padding-top: 3px;
}
.task svg {
    width: 28px;
    height: 28px;
}
.task.start {
    padding-top: 0;
}
.task.start svg {
    width: 36px;
    height: 36px;
}
.task.current {
    background: linear-gradient(90deg, #d8c9c2, #b89f96);
    border: 1px solid #eee;
}
.task.open {
    background-color: rgba(255, 255, 255, 0.25);
    border: 1px solid rgba(255, 255, 255, 0.5);
}
.tray {
    display: flex;
    margin-left: auto;
    color: #fff;
    font-size: 10px;
}
.lang {
    padding-top: 6px;
    margin-right: 104px;
}
.clock {
    padding-top: 3px;
}
.desktop {
    width: 12px;
    height: 34px;
    margin-left: 14px;
    background-color: #93a594;
    border-left: 1px solid #cdd6ce;
}
```
